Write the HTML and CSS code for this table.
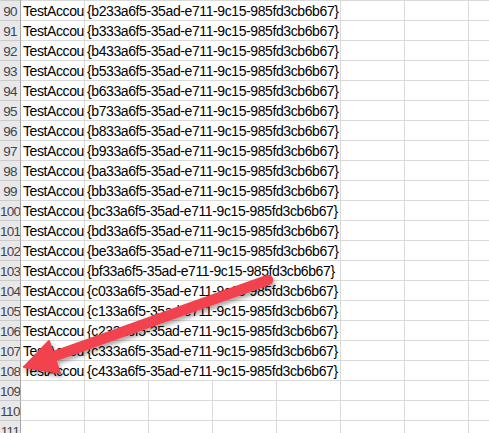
FILE: index.html
```html
<!DOCTYPE html>
<html>
<head>
<meta charset="utf-8">
<link rel="stylesheet" href="styles.css">
</head>
<body>
<div class="sheet">
  <div class="row"><div class="rh">90</div><div class="c a">TestAccount1</div><div class="c wide">{b233a6f5-35ad-e711-9c15-985fd3cb6b67}</div><div class="c"></div><div class="c"></div><div class="c last"></div></div>
  <div class="row"><div class="rh">91</div><div class="c a">TestAccount1</div><div class="c wide">{b333a6f5-35ad-e711-9c15-985fd3cb6b67}</div><div class="c"></div><div class="c"></div><div class="c last"></div></div>
  <div class="row"><div class="rh">92</div><div class="c a">TestAccount1</div><div class="c wide">{b433a6f5-35ad-e711-9c15-985fd3cb6b67}</div><div class="c"></div><div class="c"></div><div class="c last"></div></div>
  <div class="row"><div class="rh">93</div><div class="c a">TestAccount1</div><div class="c wide">{b533a6f5-35ad-e711-9c15-985fd3cb6b67}</div><div class="c"></div><div class="c"></div><div class="c last"></div></div>
  <div class="row"><div class="rh">94</div><div class="c a">TestAccount1</div><div class="c wide">{b633a6f5-35ad-e711-9c15-985fd3cb6b67}</div><div class="c"></div><div class="c"></div><div class="c last"></div></div>
  <div class="row"><div class="rh">95</div><div class="c a">TestAccount1</div><div class="c wide">{b733a6f5-35ad-e711-9c15-985fd3cb6b67}</div><div class="c"></div><div class="c"></div><div class="c last"></div></div>
  <div class="row"><div class="rh">96</div><div class="c a">TestAccount1</div><div class="c wide">{b833a6f5-35ad-e711-9c15-985fd3cb6b67}</div><div class="c"></div><div class="c"></div><div class="c last"></div></div>
  <div class="row"><div class="rh">97</div><div class="c a">TestAccount1</div><div class="c wide">{b933a6f5-35ad-e711-9c15-985fd3cb6b67}</div><div class="c"></div><div class="c"></div><div class="c last"></div></div>
  <div class="row"><div class="rh">98</div><div class="c a">TestAccount1</div><div class="c wide">{ba33a6f5-35ad-e711-9c15-985fd3cb6b67}</div><div class="c"></div><div class="c"></div><div class="c last"></div></div>
  <div class="row"><div class="rh">99</div><div class="c a">TestAccount1</div><div class="c wide">{bb33a6f5-35ad-e711-9c15-985fd3cb6b67}</div><div class="c"></div><div class="c"></div><div class="c last"></div></div>
  <div class="row"><div class="rh">100</div><div class="c a">TestAccount1</div><div class="c wide">{bc33a6f5-35ad-e711-9c15-985fd3cb6b67}</div><div class="c"></div><div class="c"></div><div class="c last"></div></div>
  <div class="row"><div class="rh">101</div><div class="c a">TestAccount1</div><div class="c wide">{bd33a6f5-35ad-e711-9c15-985fd3cb6b67}</div><div class="c"></div><div class="c"></div><div class="c last"></div></div>
  <div class="row"><div class="rh">102</div><div class="c a">TestAccount1</div><div class="c wide">{be33a6f5-35ad-e711-9c15-985fd3cb6b67}</div><div class="c"></div><div class="c"></div><div class="c last"></div></div>
  <div class="row"><div class="rh">103</div><div class="c a">TestAccount1</div><div class="c wide">{bf33a6f5-35ad-e711-9c15-985fd3cb6b67}</div><div class="c"></div><div class="c"></div><div class="c last"></div></div>
  <div class="row"><div class="rh">104</div><div class="c a">TestAccount1</div><div class="c wide">{c033a6f5-35ad-e711-9c15-985fd3cb6b67}</div><div class="c"></div><div class="c"></div><div class="c last"></div></div>
  <div class="row"><div class="rh">105</div><div class="c a">TestAccount1</div><div class="c wide">{c133a6f5-35ad-e711-9c15-985fd3cb6b67}</div><div class="c"></div><div class="c"></div><div class="c last"></div></div>
  <div class="row"><div class="rh">106</div><div class="c a">TestAccount1</div><div class="c wide">{c233a6f5-35ad-e711-9c15-985fd3cb6b67}</div><div class="c"></div><div class="c"></div><div class="c last"></div></div>
  <div class="row"><div class="rh">107</div><div class="c a">TestAccount1</div><div class="c wide">{c333a6f5-35ad-e711-9c15-985fd3cb6b67}</div><div class="c"></div><div class="c"></div><div class="c last"></div></div>
  <div class="row"><div class="rh">108</div><div class="c a">TestAccount1</div><div class="c wide">{c433a6f5-35ad-e711-9c15-985fd3cb6b67}</div><div class="c"></div><div class="c"></div><div class="c last"></div></div>
  <div class="row"><div class="rh">109</div><div class="c"></div><div class="c"></div><div class="c"></div><div class="c"></div><div class="c"></div><div class="c"></div><div class="c"></div><div class="c last"></div></div>
  <div class="row"><div class="rh">110</div><div class="c"></div><div class="c"></div><div class="c"></div><div class="c"></div><div class="c"></div><div class="c"></div><div class="c"></div><div class="c last"></div></div>
  <div class="row"><div class="rh">111</div><div class="c"></div><div class="c"></div><div class="c"></div><div class="c"></div><div class="c"></div><div class="c"></div><div class="c"></div><div class="c last"></div></div>

  <svg class="arrow" width="489" height="433" viewBox="0 0 489 433">
    <defs>
      <filter id="shadow" x="-20%" y="-40%" width="140%" height="180%">
        <feDropShadow dx="1.5" dy="3" stdDeviation="2.2" flood-color="#000" flood-opacity="0.35"/>
      </filter>
    </defs>
    <g filter="url(#shadow)">
      <line x1="268" y1="280" x2="52" y2="357" stroke="#f1434e" stroke-width="10.5" stroke-linecap="round"/>
      <polygon points="24,367 49,341 60,373" fill="#f1434e" stroke="#f1434e" stroke-width="2" stroke-linejoin="round"/>
    </g>
  </svg>
</div>
</body>
</html>
```

FILE: styles.css
```css
html, body {
  margin: 0;
  padding: 0;
  background: #ffffff;
}

body {
  width: 489px;
  height: 433px;
  overflow: hidden;
  font-family: "Liberation Sans", Arial, sans-serif;
}

.sheet {
  position: relative;
  width: 489px;
  height: 433px;
  overflow: hidden;
}

.row {
  display: flex;
  height: 20px;
  box-sizing: border-box;
  border-top: 1px solid #dadada;
}

.rh {
  flex: 0 0 21px;
  box-sizing: border-box;
  height: 20px;
  margin-top: -1px;
  padding-top: 2px;
  background: #e8e8e8;
  border-right: 1px solid #a6a6a6;
  border-top: 1px solid #cbcbcb;
  color: #3f4451;
  font-size: 13.5px;
  letter-spacing: -0.7px;
  line-height: 18px;
  text-align: center;
  overflow: hidden;
  white-space: nowrap;
}

.c {
  flex: 0 0 61px;
  box-sizing: content-box;
  height: 18px;
  padding-top: 1px;
  padding-left: 2px;
  border-right: 1px solid #dadada;
  line-height: 19px;
  font-size: 14px;
  letter-spacing: -0.4px;
  color: #000;
  overflow: hidden;
  white-space: nowrap;
}

.c.wide {
  flex-basis: 253px;
}

.arrow {
  position: absolute;
  left: 0;
  top: 0;
  pointer-events: none;
}
```
